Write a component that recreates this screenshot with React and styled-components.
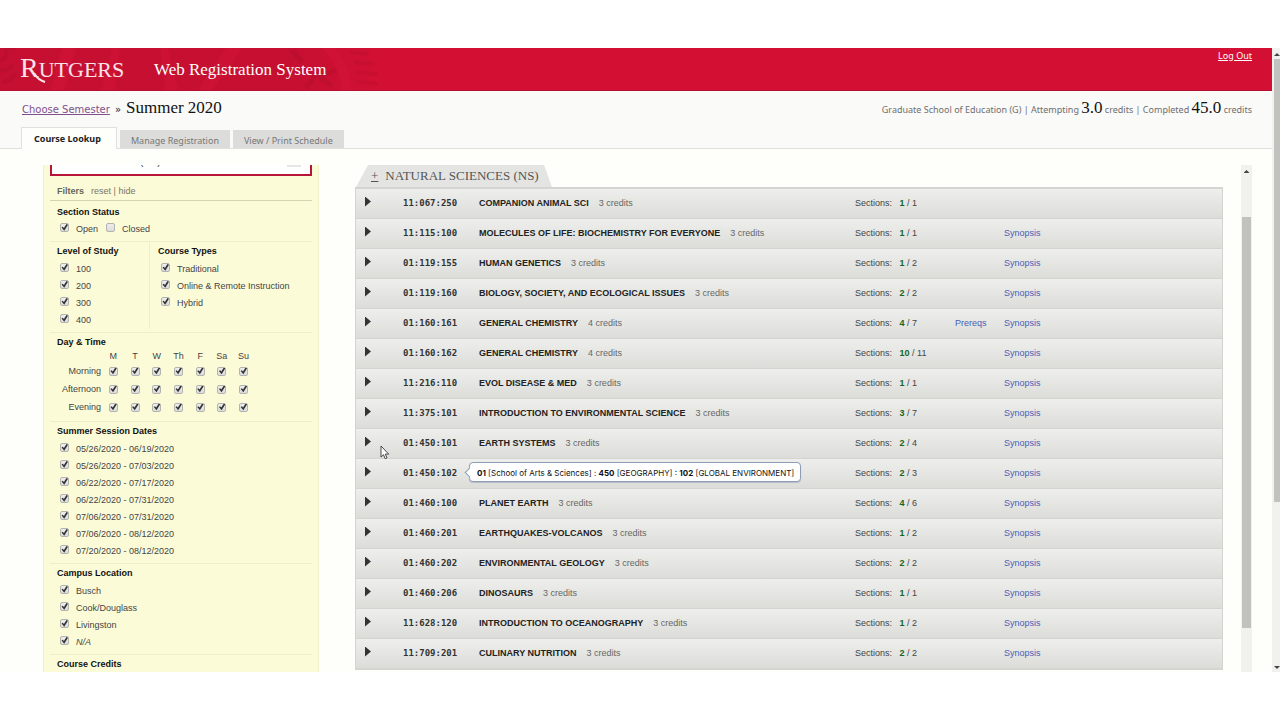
import React from "react";
import styled, { createGlobalStyle, css } from "styled-components";

const fonts = {
  sans: `"Liberation Sans", Arial, sans-serif`,
  verdana: `"DejaVu Sans", Verdana, sans-serif`,
  tahoma: `"Noto Sans", Tahoma, sans-serif`,
  tooltip: `Inter, "Noto Sans", sans-serif`,
  serif: `"Liberation Serif", Georgia, serif`,
  mono: `"DejaVu Sans Mono", Consolas, monospace`,
};

const GlobalStyle = createGlobalStyle`
  * {
    box-sizing: border-box;
  }

  body {
    margin: 0;
    background: #ffffff;
    color: #333333;
    font-family: ${fonts.sans};
    font-size: 9px;
  }

  h1, h2, h3, p {
    margin: 0;
  }
`;

const Screen = styled.div`
  display: flex;
  height: 100vh;
  padding: 48px 0;
`;

const Page = styled.div`
  display: flex;
  flex-direction: column;
  flex: 1;
  min-width: 0;
  background: #fefefb;
`;

const Banner = styled.header`
  position: relative;
  display: flex;
  align-items: center;
  flex: none;
  height: 43px;
  padding: 0 20px;
  background: #d31034;
  color: #ffffff;
  border-bottom: 1px solid #b60f31;
`;

const BannerArt = styled.svg`
  position: absolute;
  left: 0;
  top: 0;
`;

const Brand = styled.div`
  position: relative;
  flex: none;
  width: 134px;
  font-family: ${fonts.serif};
  font-size: 22px;
  line-height: 42px;
  color: #fbe3e6;

  &::first-letter {
    font-size: 28px;
  }
`;

const Swash = styled.svg`
  position: absolute;
  left: 14px;
  top: 26px;
`;

const SystemName = styled.h1`
  position: relative;
  flex: 1;
  padding-top: 2px;
  font-family: ${fonts.serif};
  font-weight: 400;
  font-size: 17px;
`;

const LogOut = styled.a`
  align-self: flex-start;
  padding-top: 2px;
  font-family: ${fonts.tahoma};
  font-size: 9px;
  line-height: 12px;
  color: #ffffff;
`;

const SubHeader = styled.div`
  flex: none;
  background: #fafaf8;
  border-bottom: 1px solid #e0e0dc;
`;

const StatusLine = styled.div`
  display: flex;
  align-items: center;
  justify-content: space-between;
  height: 36px;
  padding: 0 20px 0 22px;
`;

const Semester = styled.div`
  display: flex;
  align-items: baseline;
  gap: 5px;
  padding-bottom: 2px;
  font-family: ${fonts.verdana};
  font-size: 10px;
  color: #222222;

  a {
    color: #80508c;
  }

  h2 {
    font-family: ${fonts.serif};
    font-weight: 400;
    font-size: 17px;
    color: #111111;
  }
`;

const CreditTotals = styled.p`
  padding-bottom: 2px;
  font-family: ${fonts.tahoma};
  font-size: 9px;
  color: #6e6e6e;

  strong {
    font-family: ${fonts.serif};
    font-weight: 400;
    font-size: 17px;
    line-height: 20px;
    color: #111111;
  }
`;

const Tabs = styled.nav`
  display: flex;
  align-items: flex-end;
  gap: 3px;
  height: 21px;
  padding-left: 21px;
`;

const Tab = styled.a`
  height: 18px;
  padding: 0 11px;
  background: #dcdcda;
  color: #777777;
  font-family: ${fonts.tahoma};
  font-size: 9px;
  line-height: 22px;
  text-decoration: none;

  ${(props) =>
    props.$active &&
    css`
      height: 22px;
      margin-bottom: -1px;
      padding: 0 15px 0 12px;
      background: #fefefb;
      border: 1px solid #e0e0dc;
      border-bottom: none;
      color: #222222;
      font-weight: 700;
    `}
`;

const Content = styled.main`
  display: flex;
  flex: 1;
  min-height: 0;
  padding: 16px 20px 0 43px;
`;

const Sidebar = styled.aside`
  flex: none;
  width: 276px;
  margin-right: 36px;
  padding: 0 6px;
  overflow: hidden;
  background: #fcfbd8;
  border: solid #f1f0c8;
  border-width: 0 1px;
`;

const CoreBox = styled.div`
  display: flex;
  align-items: flex-end;
  justify-content: space-between;
  height: 11px;
  padding: 0 9px 7px 88px;
  overflow: hidden;
  background: #ffffff;
  border: solid #b8143a;
  border-width: 0 2px 2px;
  font-size: 10px;
  line-height: 10px;
`;

const BoxHandle = styled.span`
  width: 14px;
  height: 10px;
  background: #e6e6e6;
`;

const FilterBar = styled.div`
  display: flex;
  align-items: center;
  height: 25px;
  padding: 5px 7px 0;
  border-bottom: 1px solid #d3d3b4;
  color: #777766;

  strong {
    margin-right: 7px;
    color: #66665a;
  }

  a {
    color: #777766;
    text-decoration: none;
  }
`;

const Section = styled.section`
  padding: ${(props) => (props.$first ? "2px 7px 3px" : "0 7px 3px")};
  border-bottom: 1px solid #efeecb;
`;

const SectionTitle = styled.h3`
  font-size: 9px;
  font-weight: 700;
  line-height: 18px;
  color: #111111;
`;

const Columns = styled.div`
  display: grid;
  grid-template-columns: 92px 1fr;

  > div + div {
    padding-left: 8px;
    border-left: 1px solid #efeecb;
  }
`;

const Options = styled.div`
  padding-top: 1px;
`;

const Option = styled.label`
  display: flex;
  align-items: flex-start;
  gap: 7px;
  height: 17px;
  padding-left: 3px;
  line-height: 17px;
  color: #444444;
  font-style: ${(props) => (props.$italic ? "italic" : "normal")};
`;

const OptionRow = styled.div`
  display: flex;
  gap: 5px;
`;

const Checkbox = styled.input.attrs({ type: "checkbox" })`
  appearance: none;
  flex: none;
  width: 9px;
  height: 9px;
  margin: 2px 0 0;
  background: linear-gradient(#eeeeee, #dcdcdc);
  border: 1px solid #b4b4ae;
  border-radius: 2px;

  &:checked::before {
    content: "";
    display: block;
    width: 7px;
    height: 7px;
    background: #333333;
    clip-path: polygon(8% 50%, 24% 38%, 42% 58%, 78% 0, 100% 12%, 46% 98%);
  }
`;

const DayTable = styled.table`
  width: 198px;
  margin-bottom: 2px;
  table-layout: fixed;
  border-collapse: collapse;
  color: #444444;

  th,
  td {
    height: 18px;
    padding: 0 1px 0 0;
    font-weight: 400;
    line-height: 12px;
    text-align: center;
  }

  thead th {
    height: 11px;
    line-height: 11px;
  }

  tbody th {
    padding-right: 2px;
    text-align: right;
  }

  th:first-child {
    width: 46px;
  }

  input {
    display: block;
    margin: 0 auto;
  }
`;

const Results = styled.section`
  flex: 1;
  min-width: 0;
  overflow: hidden;
`;

const GroupTab = styled.h2`
  display: flex;
  align-items: center;
  gap: 7px;
  width: 196px;
  height: 22px;
  margin-left: 1px;
  padding-left: 15px;
  background: #e4e5e2;
  clip-path: polygon(12px 0, 188px 0, 100% 100%, 0 100%);
  font-family: ${fonts.serif};
  font-size: 13px;
  font-weight: 400;
  color: #555555;

  a {
    color: #555555;
  }
`;

const CourseList = styled.ul`
  margin: 0;
  padding: 0;
  list-style: none;
  border: 1px solid #d4d5d1;
  border-top-width: 2px;
`;

const Course = styled.li`
  position: relative;
  display: grid;
  grid-template-columns: 38px 76px 1fr 100px 49px 218px;
  align-items: center;
  height: 30px;
  padding: 0 0 1px 9px;
  background: linear-gradient(#eeefec, #dcddd9);
  border-bottom: 1px solid #d4d5d1;
`;

const Expand = styled.button`
  width: 6px;
  height: 10px;
  margin-bottom: 3px;
  padding: 0;
  border: none;
  background: #333333;
  clip-path: polygon(0 0, 100% 50%, 0 100%);
`;

const Code = styled.span`
  font-family: ${fonts.mono};
  font-size: 9px;
  font-weight: 700;
  color: #333333;
`;

const Name = styled.span`
  white-space: nowrap;
  color: #666666;

  strong {
    margin-right: 10px;
    color: #222222;
  }
`;

const Sections = styled.span`
  color: #444444;

  strong {
    margin-left: 5px;
    color: #17641c;
  }
`;

const CourseLink = styled.a`
  color: #4860b8;
  text-decoration: none;
`;

const Tooltip = styled.div`
  position: absolute;
  left: 113px;
  top: 3px;
  height: 20px;
  padding: 0 6px 0 7px;
  background: #ffffff;
  border: 1px solid #8e9db4;
  border-radius: 4px;
  box-shadow: 0 1px 1px #b4bcc8;
  font-family: ${fonts.tooltip};
  font-size: 8px;
  line-height: 20px;
  white-space: nowrap;
  color: #111111;

  &::before {
    content: "";
    position: absolute;
    left: -4px;
    top: 6px;
    width: 6px;
    height: 6px;
    background: #ffffff;
    border: solid #8e9db4;
    border-width: 0 0 1px 1px;
    transform: rotate(45deg);
  }
`;

const Pointer = styled.svg`
  position: absolute;
  left: 24px;
  top: 16px;
  z-index: 1;
`;

const Track = styled.div`
  display: flex;
  flex-direction: column;
  align-items: center;
  flex: none;
  width: 11px;
  margin-left: 18px;
  background: #f1f1ee;
`;

const WindowTrack = styled(Track)`
  align-items: flex-end;
  justify-content: space-between;
  width: 8px;
  margin-left: 0;
  overflow: hidden;
`;

const Arrow = styled.span`
  flex: none;
  width: 6px;
  height: 3px;
  margin: 5px 0 3px;
  background: #444444;
  clip-path: ${(props) =>
    props.$down ? "polygon(0 0, 100% 0, 50% 100%)" : "polygon(50% 0, 100% 100%, 0 100%)"};
`;

const Thumb = styled.div`
  width: 9px;
  height: 81%;
  margin-top: 41px;
  background: #c1c1be;
`;

const WindowThumb = styled(Thumb)`
  width: 6px;
  height: 71%;
  margin: 0 0 auto;
`;

const levels = ["100", "200", "300", "400"];
const courseTypes = ["Traditional", "Online & Remote Instruction", "Hybrid"];
const days = ["M", "T", "W", "Th", "F", "Sa", "Su"];
const times = ["Morning", "Afternoon", "Evening"];

const sessions = [
  "05/26/2020 - 06/19/2020",
  "05/26/2020 - 07/03/2020",
  "06/22/2020 - 07/17/2020",
  "06/22/2020 - 07/31/2020",
  "07/06/2020 - 07/31/2020",
  "07/06/2020 - 08/12/2020",
  "07/20/2020 - 08/12/2020",
];

const campuses = ["Busch", "Cook/Douglass", "Livingston", "N/A"];

const courses = [
  { code: "11:067:250", name: "COMPANION ANIMAL SCI", credits: 3, open: 1, total: 1, noSynopsis: true },
  { code: "11:115:100", name: "MOLECULES OF LIFE: BIOCHEMISTRY FOR EVERYONE", credits: 3, open: 1, total: 1 },
  { code: "01:119:155", name: "HUMAN GENETICS", credits: 3, open: 1, total: 2 },
  { code: "01:119:160", name: "BIOLOGY, SOCIETY, AND ECOLOGICAL ISSUES", credits: 3, open: 2, total: 2 },
  { code: "01:160:161", name: "GENERAL CHEMISTRY", credits: 4, open: 4, total: 7, prereqs: true },
  { code: "01:160:162", name: "GENERAL CHEMISTRY", credits: 4, open: 10, total: 11 },
  { code: "11:216:110", name: "EVOL DISEASE & MED", credits: 3, open: 1, total: 1 },
  { code: "11:375:101", name: "INTRODUCTION TO ENVIRONMENTAL SCIENCE", credits: 3, open: 3, total: 7 },
  { code: "01:450:101", name: "EARTH SYSTEMS", credits: 3, open: 2, total: 4, pointer: true },
  { code: "01:450:102", open: 2, total: 3, tooltip: true },
  { code: "01:460:100", name: "PLANET EARTH", credits: 3, open: 4, total: 6 },
  { code: "01:460:201", name: "EARTHQUAKES-VOLCANOS", credits: 3, open: 1, total: 2 },
  { code: "01:460:202", name: "ENVIRONMENTAL GEOLOGY", credits: 3, open: 2, total: 2 },
  { code: "01:460:206", name: "DINOSAURS", credits: 3, open: 1, total: 1 },
  { code: "11:628:120", name: "INTRODUCTION TO OCEANOGRAPHY", credits: 3, open: 1, total: 2 },
  { code: "11:709:201", name: "CULINARY NUTRITION", credits: 3, open: 2, total: 2 },
];

const CheckOption = ({ label, checked = true }) => (
  <Option $italic={label === "N/A"}>
    <Checkbox defaultChecked={checked} />
    {label}
  </Option>
);

const CheckList = ({ title, options }) => (
  <div>
    <SectionTitle>{title}</SectionTitle>
    <Options>
      {options.map((option) => (
        <CheckOption key={option} label={option} />
      ))}
    </Options>
  </div>
);

const SealPattern = () => (
  <BannerArt width="390" height="42" viewBox="0 0 390 42" aria-hidden="true">
    <defs>
      <linearGradient id="sealFade">
        <stop offset="0.75" stopColor="#bd0f2f" stopOpacity="0.6" />
        <stop offset="1" stopColor="#bd0f2f" stopOpacity="0" />
      </linearGradient>
    </defs>
    <rect width="390" height="42" fill="url(#sealFade)" />
    <g fill="none" stroke="#a80d2a" opacity="0.3">
      <path d="M0 12q8-2 6-8t10-4M0 22q10 2 12-6M2 34q8 0 14-8" strokeWidth="4" />
      <path d="M292 2l10 12M306 40l10-14 16 12M322 28l14-6" strokeWidth="5" />
      <path d="M350 4l18 2M354 14l20 2M356 24l22 2M356 34l22 2" strokeWidth="4" opacity="0.6" />
    </g>
    <g fill="#d9183c" opacity="0.35">
      <path d="M62 0h14L64 42H50zM112 0h8l-6 42h-12zM160 0h8l10 42h-12zM226 0h16l-30 42h-14z" />
      <path d="M322 0h12q16 18 18 42h-10q-2-24-20-42z" />
    </g>
  </BannerArt>
);

const CourseRow = ({ course }) => (
  <Course>
    <Expand aria-label={`Show sections of ${course.code}`} />
    <Code>{course.code}</Code>
    <Name>
      {course.name && (
        <>
          <strong>{course.name}</strong>
          {course.credits} credits
        </>
      )}
    </Name>
    <Sections>
      Sections: <strong>{course.open}</strong> / {course.total}
    </Sections>
    <span>{course.prereqs && <CourseLink href="#prereqs">Prereqs</CourseLink>}</span>
    <span>{!course.noSynopsis && <CourseLink href="#synopsis">Synopsis</CourseLink>}</span>
    {course.pointer && (
      <Pointer width="10" height="15" viewBox="0 0 10 15" aria-hidden="true">
        <path d="M1 1v11l2.500-2.300 1.700 4 1.800-.8-1.700-3.800H8.700z" fill="#fff" stroke="#333" strokeWidth="0.900" />
      </Pointer>
    )}
    {course.tooltip && (
      <Tooltip role="tooltip">
        <b>01</b> [School of Arts &amp; Sciences] : <b>450</b> [GEOGRAPHY] : <b>102</b> [GLOBAL
        ENVIRONMENT]
      </Tooltip>
    )}
  </Course>
);

const App = () => (
  <Screen>
    <GlobalStyle />
    <Page>
      <Banner>
        <SealPattern />
        <Brand>
          RUTGERS
          <Swash width="14" height="11" viewBox="0 0 14 11" aria-hidden="true">
            <path d="M0 0q4 7 11 9" fill="none" stroke="#fbe3e6" strokeWidth="2" />
          </Swash>
        </Brand>
        <SystemName>Web Registration System</SystemName>
        <LogOut href="#logout">Log Out</LogOut>
      </Banner>

      <SubHeader>
        <StatusLine>
          <Semester>
            <a href="#semester">Choose Semester</a>
            <span>»</span>
            <h2>Summer 2020</h2>
          </Semester>
          <CreditTotals>
            Graduate School of Education (G) | Attempting <strong>3.0</strong> credits | Completed{" "}
            <strong>45.0</strong> credits
          </CreditTotals>
        </StatusLine>
        <Tabs>
          <Tab href="#lookup" $active>
            Course Lookup
          </Tab>
          <Tab href="#manage">Manage Registration</Tab>
          <Tab href="#schedule">View / Print Schedule</Tab>
        </Tabs>
      </SubHeader>

      <Content>
        <Sidebar>
          <CoreBox>
            <span>(NS)</span>
            <BoxHandle />
          </CoreBox>
          <FilterBar>
            <strong>Filters</strong>
            <a href="#reset">reset</a>&nbsp;|&nbsp;<a href="#hide">hide</a>
          </FilterBar>
          <Section $first>
            <SectionTitle>Section Status</SectionTitle>
            <OptionRow>
              <CheckOption label="Open" />
              <CheckOption label="Closed" checked={false} />
            </OptionRow>
          </Section>
          <Section>
            <Columns>
              <CheckList title="Level of Study" options={levels} />
              <CheckList title="Course Types" options={courseTypes} />
            </Columns>
          </Section>
          <Section>
            <SectionTitle>Day &amp; Time</SectionTitle>
            <DayTable>
              <thead>
                <tr>
                  <th />
                  {days.map((day) => (
                    <th key={day}>{day}</th>
                  ))}
                </tr>
              </thead>
              <tbody>
                {times.map((time) => (
                  <tr key={time}>
                    <th>{time}</th>
                    {days.map((day) => (
                      <td key={day}>
                        <Checkbox defaultChecked aria-label={`${day} ${time}`} />
                      </td>
                    ))}
                  </tr>
                ))}
              </tbody>
            </DayTable>
          </Section>
          <Section>
            <CheckList title="Summer Session Dates" options={sessions} />
          </Section>
          <Section>
            <CheckList title="Campus Location" options={campuses} />
          </Section>
          <Section>
            <SectionTitle>Course Credits</SectionTitle>
          </Section>
        </Sidebar>

        <Results>
          <GroupTab>
            <a href="#expand">+</a>
            NATURAL SCIENCES (NS)
          </GroupTab>
          <CourseList>
            {courses.map((course) => (
              <CourseRow key={course.code} course={course} />
            ))}
          </CourseList>
        </Results>
        <Track>
          <Arrow />
          <Thumb />
        </Track>
      </Content>
    </Page>
    <WindowTrack>
      <Arrow />
      <WindowThumb />
      <Arrow $down />
    </WindowTrack>
  </Screen>
);

export default App;
